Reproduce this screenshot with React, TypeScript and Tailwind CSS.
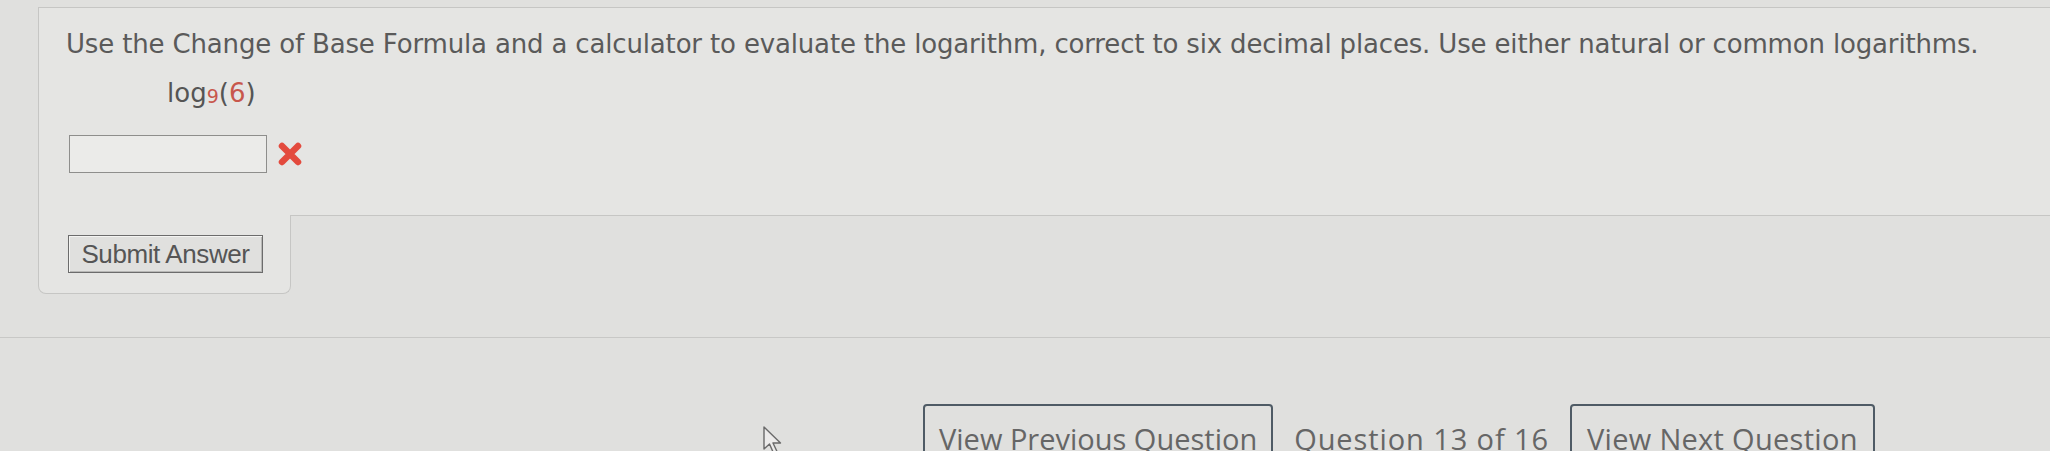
import { useState } from 'react';

function RedCross() {
    return (
        <svg width="26" height="25" viewBox="0 0 26 25" className="shrink-0">
            <path d="M5 4 L21 20 M21 4 L5 20" stroke="#e34a3d" strokeWidth="6.5" strokeLinecap="round" />
        </svg>
    );
}

function Cursor() {
    return (
        <svg width="22" height="30" viewBox="0 0 22 30" className="absolute left-[762px] top-[425px]">
            <path
                d="M2 2 L2 24 L7.5 19 L11.5 28 L15 26.5 L11 18 L18.5 18 Z"
                fill="#ecebea"
                stroke="#6a6a6a"
                strokeWidth="1.4"
                strokeLinejoin="round"
            />
        </svg>
    );
}

export default function App() {
    const [answer, setAnswer] = useState('');

    return (
        <div className="relative w-[2050px] h-[451px] overflow-hidden bg-[#e0e0de] font-['DejaVu_Sans',sans-serif] text-[#5a5a5a]">
            <div className="pt-[7px] pl-[38px]">
                {/* Question panel */}
                <div className="border-t border-l border-[#c6c6c4] bg-[#e5e5e3] pt-[20px] pl-[27px] pb-[42px]">
                    <p className="text-[26px] leading-[32px] tracking-[-0.16px]">
                        Use the Change of Base Formula and a calculator to evaluate the logarithm, correct to six
                        decimal places. Use either natural or common logarithms.
                    </p>

                    <div className="mt-[17px] pl-[101px] text-[26px] leading-[32px] text-[#555]">
                        log
                        <sub className="text-[19px] text-[#c8574c] relative top-[1px]">9</sub>
                        (<span className="text-[#c8574c]">6</span>)
                    </div>

                    <div className="mt-[26px] pl-[3px] flex items-center gap-[10px]">
                        <input
                            value={answer}
                            onChange={(e) => setAnswer(e.target.value)}
                            className="w-[198px] h-[38px] border border-[#8e8e8c] bg-[#ebebe9] px-2 text-[20px] outline-none"
                        />
                        <RedCross />
                    </div>
                </div>

                {/* Submit tab */}
                <div className="flex">
                    <div className="w-[253px] border-l border-r border-b border-[#c6c6c4] rounded-b-[8px] bg-[#e5e5e3] pt-[20px] pb-[20px] pl-[29px]">
                        <button className="w-[195px] h-[38px] border border-[#6c6c6c] bg-[#e0e0de] shadow-[inset_1px_1px_0_#f4f4f2,inset_-1px_-1px_0_#b8b8b6] font-['Liberation_Sans',sans-serif] text-[26px] leading-none text-[#555] tracking-[-0.4px]">
                            Submit Answer
                        </button>
                    </div>
                    <div className="flex-1 border-t border-[#c6c6c4]" />
                </div>
            </div>

            <div className="mt-[43px] border-t border-[#c8c8c6]" />

            {/* Question navigation */}
            <div className="mt-[66px] pl-[923px] flex items-start gap-[21px] font-['Open_Sans',sans-serif] text-[29px] leading-[38px] text-[#666]">
                <button className="h-[70px] border-2 border-[#4f5b65] rounded-[4px] px-[14px] pt-[14px] flex items-start text-[#666]">
                    View Previous Question
                </button>
                <span className="pt-[16px] tracking-[0.9px]">Question 13 of 16</span>
                <button className="h-[70px] border-2 border-[#4f5b65] rounded-[4px] px-[15px] pt-[14px] flex items-start text-[#666] tracking-[0.3px]">
                    View Next Question
                </button>
            </div>

            <Cursor />
        </div>
    );
}
